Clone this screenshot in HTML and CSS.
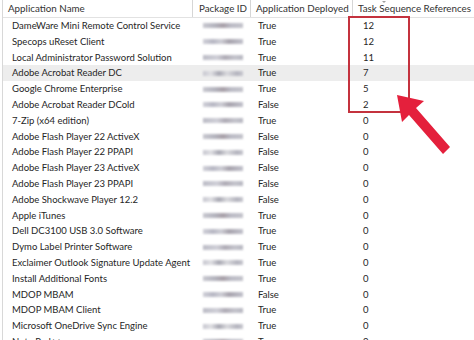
FILE: index.html
```html
<!DOCTYPE html>
<html>
<head>
<meta charset="utf-8">
<link rel="stylesheet" href="styles.css">
</head>
<body>
<div class="grid">
  <div class="head">
    <div class="hc c1">Application Name</div>
    <div class="hc c2">Package ID</div>
    <div class="hc c3">Application Deployed</div>
    <div class="hc c4">Task Sequence References<span class="sort"></span></div>
  </div>
  <div class="rows">
    <div class="row"><span class="c1">DameWare Mini Remote Control Service</span><span class="c2"><i class="blur"></i></span><span class="c3">True</span><span class="c4">12</span></div>
    <div class="row"><span class="c1">Specops uReset Client</span><span class="c2"><i class="blur b2"></i></span><span class="c3">True</span><span class="c4">12</span></div>
    <div class="row"><span class="c1">Local Administrator Password Solution</span><span class="c2"><i class="blur b3"></i></span><span class="c3">True</span><span class="c4">11</span></div>
    <div class="row sel"><span class="c1">Adobe Acrobat Reader DC</span><span class="c2"><i class="blur b4"></i></span><span class="c3">True</span><span class="c4">7</span></div>
    <div class="row"><span class="c1">Google Chrome Enterprise</span><span class="c2"><i class="blur"></i></span><span class="c3">True</span><span class="c4">5</span></div>
    <div class="row"><span class="c1">Adobe Acrobat Reader DCold</span><span class="c2"><i class="blur b2"></i></span><span class="c3">False</span><span class="c4">2</span></div>
    <div class="row"><span class="c1">7-Zip (x64 edition)</span><span class="c2"><i class="blur b3"></i></span><span class="c3">True</span><span class="c4">0</span></div>
    <div class="row"><span class="c1">Adobe Flash Player 22 ActiveX</span><span class="c2"><i class="blur"></i></span><span class="c3">False</span><span class="c4">0</span></div>
    <div class="row"><span class="c1">Adobe Flash Player 22 PPAPI</span><span class="c2"><i class="blur b4"></i></span><span class="c3">False</span><span class="c4">0</span></div>
    <div class="row"><span class="c1">Adobe Flash Player 23 ActiveX</span><span class="c2"><i class="blur b2"></i></span><span class="c3">False</span><span class="c4">0</span></div>
    <div class="row"><span class="c1">Adobe Flash Player 23 PPAPI</span><span class="c2"><i class="blur b3"></i></span><span class="c3">False</span><span class="c4">0</span></div>
    <div class="row"><span class="c1">Adobe Shockwave Player 12.2</span><span class="c2"><i class="blur b4"></i></span><span class="c3">False</span><span class="c4">0</span></div>
    <div class="row"><span class="c1">Apple iTunes</span><span class="c2"><i class="blur"></i></span><span class="c3">True</span><span class="c4">0</span></div>
    <div class="row"><span class="c1">Dell DC3100 USB 3.0 Software</span><span class="c2"><i class="blur b2"></i></span><span class="c3">True</span><span class="c4">0</span></div>
    <div class="row"><span class="c1">Dymo Label Printer Software</span><span class="c2"><i class="blur b3"></i></span><span class="c3">True</span><span class="c4">0</span></div>
    <div class="row"><span class="c1">Exclaimer Outlook Signature Update Agent</span><span class="c2"><i class="blur b4"></i></span><span class="c3">True</span><span class="c4">0</span></div>
    <div class="row"><span class="c1">Install Additional Fonts</span><span class="c2"><i class="blur"></i></span><span class="c3">True</span><span class="c4">0</span></div>
    <div class="row"><span class="c1">MDOP MBAM</span><span class="c2"><i class="blur b2"></i></span><span class="c3">False</span><span class="c4">0</span></div>
    <div class="row"><span class="c1">MDOP MBAM Client</span><span class="c2"><i class="blur b3"></i></span><span class="c3">True</span><span class="c4">0</span></div>
    <div class="row"><span class="c1">Microsoft OneDrive Sync Engine</span><span class="c2"><i class="blur b4"></i></span><span class="c3">True</span><span class="c4">0</span></div>
    <div class="row"><span class="c1">Note Pad++</span><span class="c2"><i class="blur"></i></span><span class="c3">True</span><span class="c4">0</span></div>
  </div>
  <div class="redbox"></div>
  <svg class="arrow" width="474" height="340" viewBox="0 0 474 340">
    <polygon points="397,95 424,101 416,108 450,147 443,154 409,115 402,122" fill="#e4203c"/>
  </svg>
</div>
</body>
</html>
```
FILE: styles.css
```css
html, body {
  margin: 0;
  padding: 0;
  background: #ffffff;
}
body {
  width: 474px;
  height: 340px;
  overflow: hidden;
  font-family: "Lato", "Noto Sans", sans-serif;
  font-size: 9.5px;
  color: #262626;
}
.grid {
  position: relative;
  box-sizing: border-box;
  width: 472px;
  height: 340px;
  border-left: 1px solid #d8d8d8;
  margin-left: 2px;
}
.head {
  display: grid;
  grid-template-columns: 190px 58px 102px 1fr;
  height: 17px;
  border-bottom: 1px solid #e2e2e2;
  background: #ffffff;
  font-size: 9.8px;
}
.hc {
  padding-left: 5px;
  line-height: 17px;
  white-space: nowrap;
  overflow: hidden;
  border-right: 1px solid #d6d6d6;
  color: #333;
  position: relative;
}
.hc.c2 { padding-left: 6px; }
.hc.c4 { border-right: none; overflow: visible; }
.sort {
  position: absolute;
  left: 29px;
  top: 1px;
  width: 0;
  height: 0;
  border-left: 2px solid transparent;
  border-right: 2px solid transparent;
  border-top: 2px solid #a0a0a0;
}
.rows {
  display: flex;
  flex-direction: column;
}
.row {
  display: grid;
  grid-template-columns: 190px 58px 102px 1fr;
  height: 15.8px;
  line-height: 15.8px;
  white-space: nowrap;
}
.row.sel {
  background: #ededed;
}
.row .c1 { padding-left: 9px; }
.row .c2 { padding-left: 10px; display: flex; align-items: center; }
.row .c3 { padding-left: 7px; }
.row .c4 { padding-left: 10px; }
.blur {
  display: block;
  width: 40px;
  height: 5px;
  background: linear-gradient(90deg, #c8c8d0 0%, #b4b4be 30%, #a8a0a8 50%, #bcbcc6 70%, #c4c4cc 100%);
  filter: blur(1px);
}
.b2 { background: linear-gradient(90deg, #d0d0d8 0%, #b8b8c4 25%, #cfcfd6 45%, #a8a4ae 65%, #c2c2cc 100%); }
.b3 { background: linear-gradient(90deg, #bcbcc6 0%, #d0d0d8 35%, #b0acb6 55%, #c4c4cc 80%, #b8b8c2 100%); }
.b4 { background: linear-gradient(90deg, #c8c8d0 0%, #e0e0e4 20%, #a8a8b2 40%, #dadade 60%, #b4b4be 85%, #c8c8d0 100%); }
.redbox {
  position: absolute;
  left: 345px;
  top: 16px;
  width: 58px;
  height: 93px;
  border: 2px solid #c4323e;
}
.arrow {
  position: absolute;
  left: -3px;
  top: 0;
  pointer-events: none;
}
```
